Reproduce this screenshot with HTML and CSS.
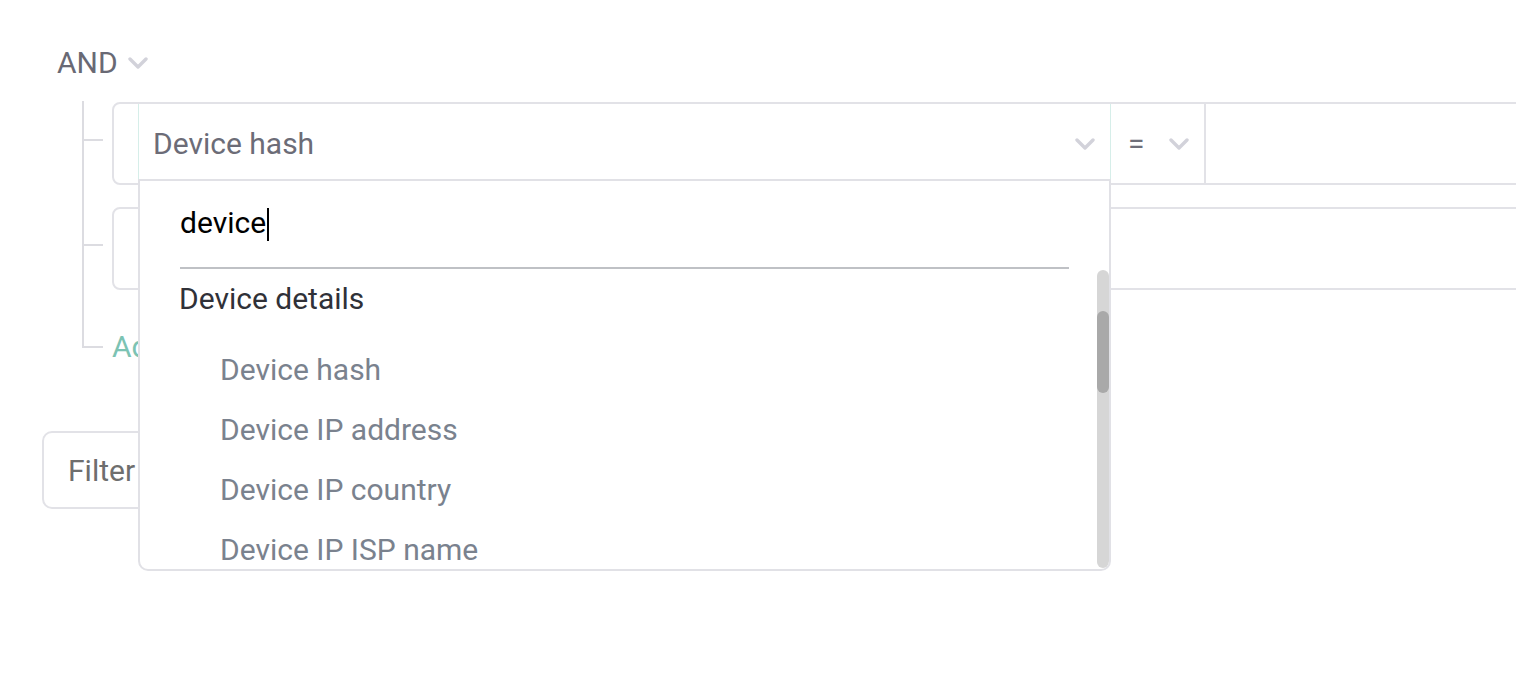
FILE: index.html
```html
<!DOCTYPE html>
<html lang="en"><head>
    <meta charset="UTF-8">
    <meta name="viewport" content="width=device-width, initial-scale=1.0">
    <title>Filter builder</title>
    <link rel="stylesheet" href="styles.css">
</head>
<body>
    <div class="page">
        <div class="group">
            <div class="combinator">
                <span>AND</span>
                <svg class="chevron" viewBox="0 0 20 12"><polyline points="2,2 10,10 18,2"/></svg>
            </div>
            <div class="tree">
                <div class="branch">
                    <div class="rule">
                        <div class="handle"></div>
                        <div class="field">
                            <span class="field-label">Device hash</span>
                            <svg class="chevron" viewBox="0 0 20 12"><polyline points="2,2 10,10 18,2"/></svg>
                            <div class="dropdown">
                                <div class="search"><span>device</span><span class="caret"></span></div>
                                <div class="options">
                                    <div class="option-list">
                                        <div class="option-group">Device details</div>
                                        <div class="option first">Device hash</div>
                                        <div class="option">Device IP address</div>
                                        <div class="option">Device IP country</div>
                                        <div class="option">Device IP ISP name</div>
                                    </div>
                                    <div class="scrollbar"><div class="thumb"></div></div>
                                </div>
                            </div>
                        </div>
                        <div class="operator">
                            <span>=</span>
                            <svg class="chevron" viewBox="0 0 20 12"><polyline points="2,2 10,10 18,2"/></svg>
                        </div>
                        <div class="value"></div>
                    </div>
                </div>
                <div class="branch">
                    <div class="rule">
                        <div class="handle"></div>
                        <div class="field"></div>
                        <div class="value"></div>
                    </div>
                </div>
                <div class="branch last">
                    <a class="add-rule">Add rule</a>
                </div>
            </div>
        </div>
        <button class="filter-btn">Filter</button>
    </div>
</body>
</html>
```

FILE: styles.css
```css
body {
    margin: 0;
    font-family: Roboto, "Noto Sans", sans-serif;
    font-size: 30px;
    background: #fff;
}
.page {
    height: 100vh;
    overflow: hidden;
    padding-left: 42px;
    box-sizing: border-box;
}
.group {
    padding-left: 15px;
    padding-top: 43px;
}
.combinator {
    display: flex;
    align-items: center;
    gap: 10px;
    line-height: 40px;
    color: #696974;
}
.chevron {
    width: 20px;
    height: 12px;
    fill: none;
    stroke: #d2d2da;
    stroke-width: 3.4;
    stroke-linecap: round;
    stroke-linejoin: round;
    flex-shrink: 0;
}
.tree {
    margin-left: 25px;
    margin-top: 19px;
}
.branch {
    position: relative;
    padding-left: 30px;
    padding-bottom: 22px;
}
.branch:nth-child(2) {
    padding-bottom: 37px;
}
.branch::before {
    content: "";
    position: absolute;
    left: 0;
    top: -1px;
    bottom: 0;
    width: 2px;
    background: #dcdce1;
}
.branch::after {
    content: "";
    position: absolute;
    left: 0;
    top: 37px;
    width: 21px;
    height: 2px;
    background: #dcdce1;
}
.branch.last {
    padding-bottom: 0;
}
.branch.last::before {
    bottom: auto;
    height: 22px;
}
.branch.last::after {
    top: 19px;
}
.rule {
    display: flex;
    width: 1500px;
    height: 83px;
    box-sizing: border-box;
    border: 2px solid #e2e2e7;
    border-radius: 8px;
    background: #fff;
}
.handle {
    width: 24px;
    flex-shrink: 0;
}
.field {
    position: relative;
    flex: 0 0 973px;
    box-sizing: border-box;
    display: flex;
    align-items: center;
    justify-content: space-between;
    padding: 0 15px 0 14px;
    border-left: 1px solid #d6eee9;
    border-right: 1px solid #d6eee9;
    color: #6c6c77;
}
.operator {
    flex: 0 0 95px;
    box-sizing: border-box;
    display: flex;
    align-items: center;
    justify-content: space-between;
    padding: 0 15px 0 17px;
    border-right: 2px solid #e2e2e7;
    color: #6f6f7a;
}
.value {
    flex: 1;
}
.dropdown {
    position: absolute;
    z-index: 10;
    top: 75px;
    left: -1px;
    right: -1px;
    height: 392px;
    box-sizing: border-box;
    border: 2px solid #e1e1e6;
    border-radius: 0 0 10px 10px;
    background: #fff;
    overflow: hidden;
}
.search {
    margin: 0 40px;
    padding: 22px 0 24px;
    line-height: 40px;
    border-bottom: 2px solid #bfc1c5;
    color: #000;
}
.caret {
    display: inline-block;
    width: 2px;
    height: 33px;
    margin-left: 1px;
    background: #000;
    vertical-align: -8px;
}
.options {
    display: flex;
    height: 300px;
}
.option-list {
    flex: 1;
    overflow: hidden;
    padding-left: 39px;
}
.option-group {
    line-height: 60px;
    color: #303138;
}
.option {
    line-height: 60px;
    padding-left: 41px;
    color: #7a828e;
}
.option.first {
    margin-top: 11px;
}
.scrollbar {
    width: 12px;
    margin: 1px 0;
    background: #d6d6d6;
    border-radius: 6px;
}
.thumb {
    margin-top: 41px;
    height: 82px;
    background: #a9a9a9;
    border-radius: 6px;
}
.add-rule {
    display: block;
    line-height: 40px;
    color: #7cc3b3;
}
.filter-btn {
    margin-top: 64px;
    padding: 18px 60px 16px 24px;
    font-family: inherit;
    font-size: 30px;
    line-height: 40px;
    color: #6e6e6e;
    background: #fff;
    border: 2px solid #e2e2e7;
    border-radius: 10px;
}
```
